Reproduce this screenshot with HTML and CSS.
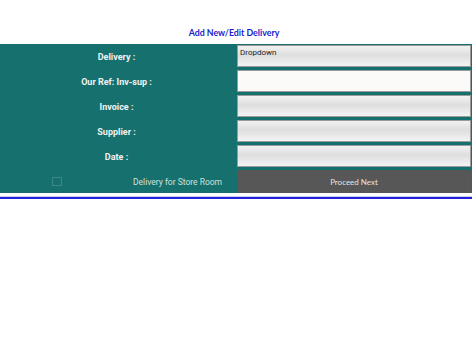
FILE: index.html
```html
<!DOCTYPE html>
<html lang="en">
<head>
  <meta charset="UTF-8" />
  <title>Add New/Edit Delivery</title>
  <link rel="stylesheet" href="styles.css">
</head>
<body>

  <h1 class="title">Add New/Edit Delivery</h1>

  <div class="form">
    <label class="lbl">Delivery :</label>
    <div class="field grad">Dropdown</div>

    <label class="lbl">Our Ref: Inv-sup :</label>
    <div class="field plain"></div>

    <label class="lbl">Invoice :</label>
    <div class="field grad"></div>

    <label class="lbl">Supplier :</label>
    <div class="field grad"></div>

    <label class="lbl">Date :</label>
    <div class="field grad"></div>

    <div class="store">
      <span class="check"></span>
      <span class="store-text">Delivery for Store Room</span>
    </div>
    <button class="next">Proceed Next</button>
  </div>

  <div class="rule"></div>

</body>
</html>
```

FILE: styles.css
```css
* {
  margin: 0;
  padding: 0;
  box-sizing: border-box;
}

body {
  font-family: Roboto, 'Liberation Sans', sans-serif;
  background: #fff;
  width: 474px;
}

.title {
  font-family: Lato, 'Liberation Sans', sans-serif;
  font-size: 8.8px;
  font-weight: bold;
  color: #1c1ccc;
  text-align: center;
  height: 44px;
  padding-top: 27px;
  padding-right: 6px;
}

.form {
  width: 472px;
  background: #15706e;
  display: grid;
  grid-template-columns: 237px 1fr;
  grid-auto-rows: 22px;
  row-gap: 3px;
  padding: 1px 1px 1px 0;
}

.lbl {
  color: #f2f2f2;
  font-size: 9px;
  font-weight: bold;
  display: flex;
  align-items: center;
  justify-content: center;
  padding-right: 4px;
  padding-top: 1px;
}

.field {
  border: 1px solid #9a9a9a;
  font-size: 8px;
  color: #222;
  padding: 2px 0 0 2px;
}

.grad {
  background: linear-gradient(#f2f2f2, #dedede 45%, #f4f4f4);
}

.plain {
  background: #fbfaf8;
}

.store {
  display: flex;
  align-items: center;
  height: 23px;
}

.check {
  width: 10px;
  height: 9px;
  border: 1px solid #3e8785;
  margin-left: 52px;
}

.store-text {
  color: #cfe0df;
  font-size: 8.5px;
  margin-left: 71px;
}

.next {
  height: 23px;
  background: #575757;
  border: none;
  color: #e4e4e4;
  font-family: Lato, 'Liberation Sans', sans-serif;
  font-size: 8px;
}

.rule {
  width: 472px;
  margin-top: 3px;
  border-top: 1px solid #c8d0f0;
  border-bottom: 2px solid #2222dd;
}
```
